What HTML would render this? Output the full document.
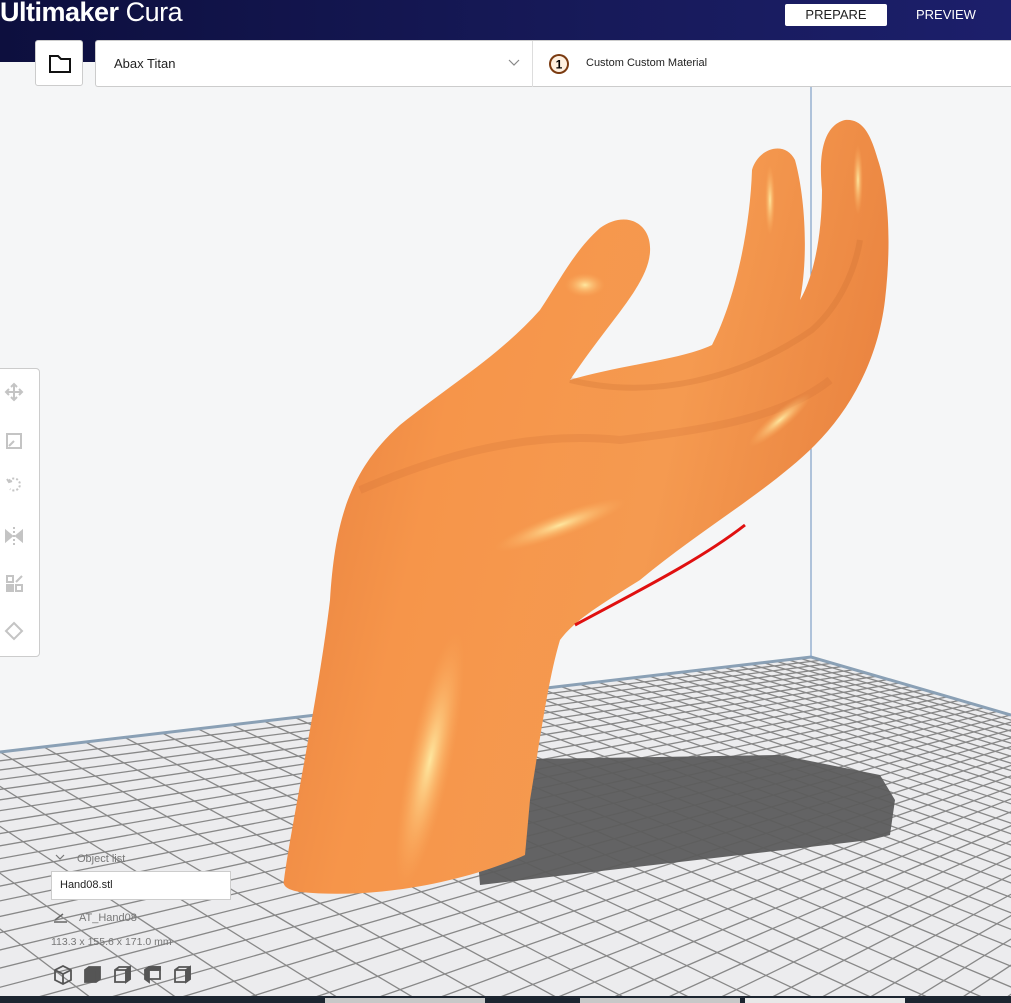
<!DOCTYPE html>
<html><head><meta charset="utf-8">
<style>
*{margin:0;padding:0;box-sizing:border-box}
html,body{width:1011px;height:1003px;overflow:hidden}
body{background:#f5f6f7;font-family:"Liberation Sans",sans-serif;position:relative}
#top{position:absolute;left:0;top:0;width:1011px;height:62px;background:linear-gradient(90deg,#0d0f3e,#171a5a 60%,#1c1f6b)}
#logo{position:absolute;left:0;top:-3px;color:#fff;font-size:27px;letter-spacing:-0.5px}
#logo b{font-weight:bold}
#prep{position:absolute;left:785px;top:4px;width:102px;height:22px;background:#fff;border-radius:2px;color:#222;font-size:13px;text-align:center;line-height:22px}
#prev{position:absolute;left:916px;top:4px;color:#fff;font-size:13px;line-height:22px}
#fold{position:absolute;left:35px;top:40px;width:48px;height:46px;background:#fff;border:1px solid #ccc;border-radius:3px}
#bar{position:absolute;left:95px;top:40px;width:916px;height:47px;background:#fff;border:1px solid #ccc;border-right:none;border-radius:3px 0 0 3px}
#bar .t1{position:absolute;left:18px;top:15px;font-size:13px;color:#222}
#bar .sep{position:absolute;left:436px;top:0;width:1px;height:46px;background:#ddd}
#bar .t2{position:absolute;left:490px;top:16px;font-size:11px;color:#222}
#tools{position:absolute;left:-4px;top:368px;width:44px;height:289px;background:#fff;border:1px solid #ccc;border-radius:4px}
.ol{position:absolute;font-size:11px;color:#777}
</style></head><body>
<svg id="scene" width="1011" height="1003" style="position:absolute;left:0;top:0">
<defs>
<linearGradient id="hg" x1="0" y1="0" x2="1" y2="0.3">
<stop offset="0" stop-color="#e27a3c"/><stop offset="0.35" stop-color="#f6954a"/><stop offset="0.7" stop-color="#f59a50"/><stop offset="1" stop-color="#ea8440"/>
</linearGradient>
<radialGradient id="hl" cx="0.5" cy="0.5" r="0.5"><stop offset="0" stop-color="#fff0a8" stop-opacity="0.9"/><stop offset="1" stop-color="#ffb060" stop-opacity="0"/></radialGradient>
<clipPath id="fl"><polygon points="811,657 1011,715 1011,1003 0,1003 0,752"/></clipPath>
</defs>
<polygon points="811,657 1011,715 1011,1003 0,1003 0,752" fill="#ececee"/>
<g id="grid" stroke="#888" stroke-width="1.3" clip-path="url(#fl)"></g>
<polygon points="470,760 780,755 880,775 895,800 890,835 870,840 480,885" fill="#5c5c5c" opacity="0.95"/>
<polyline points="0,752 811,657 1011,715" fill="none" stroke="#8aa0b5" stroke-width="3"/>
<line x1="811" y1="86" x2="811" y2="657" stroke="#7fa0c8" stroke-width="1.2"/>
<path d="M284,880 C292,820 318,700 330,600 C335,520 350,470 400,425 C450,385 500,355 540,310 C560,280 575,250 600,228 C625,210 652,222 650,252 C648,285 610,320 570,380 C620,365 680,360 712,345 C735,300 750,230 752,170 C758,148 785,140 795,160 C806,200 808,260 800,300 C812,280 822,240 822,190 C818,150 825,125 845,120 C865,118 872,140 878,160 C888,190 892,240 885,300 C878,360 850,410 815,445 C770,490 700,530 640,580 C600,605 575,620 560,640 C548,680 540,740 530,800 L525,855 C470,880 380,900 300,892 C288,890 282,886 284,880 Z" fill="url(#hg)"/>
<path d="M570,380 C650,400 740,380 812,330 C840,305 855,270 860,240" fill="none" stroke="#c86a30" stroke-width="6" opacity="0.25"/>
<path d="M360,490 C430,460 520,430 620,440 C700,430 780,420 830,380" fill="none" stroke="#c86a30" stroke-width="8" opacity="0.2"/>
<path d="M575,625 C640,590 700,560 745,525" fill="none" stroke="#e01010" stroke-width="3"/>
<ellipse cx="560" cy="525" rx="70" ry="12" transform="rotate(-20 560 525)" fill="url(#hl)"/>
<ellipse cx="430" cy="760" rx="22" ry="130" transform="rotate(12 430 760)" fill="url(#hl)"/>
<ellipse cx="780" cy="420" rx="40" ry="9" transform="rotate(-40 780 420)" fill="url(#hl)"/>
<ellipse cx="585" cy="285" rx="20" ry="12" fill="url(#hl)"/>
<ellipse cx="770" cy="200" rx="5" ry="35" fill="url(#hl)"/>
<ellipse cx="858" cy="180" rx="5" ry="35" fill="url(#hl)"/>
<rect x="0" y="996" width="1011" height="7" fill="#1c2530"/>
<rect x="325" y="998" width="160" height="5" fill="#c8c8c8"/>
<rect x="580" y="998" width="160" height="5" fill="#c8c8c8"/>
<rect x="745" y="998" width="160" height="5" fill="#e8e8e8"/>
</svg>
<div id="top"><div id="logo"><b>Ultimaker</b> Cura</div><div id="prep">PREPARE</div><div id="prev">PREVIEW</div></div>
<div id="fold"><svg width="48" height="46"><path d="M14,15 h8 l3,3 h9 v13 h-20 z" fill="none" stroke="#111" stroke-width="2"/></svg></div>
<div id="bar"><div class="t1">Abax Titan</div>
<svg style="position:absolute;left:412px;top:18px" width="12" height="8"><path d="M1,1 L6,6 L11,1" fill="none" stroke="#888" stroke-width="1.2"/></svg>
<div class="sep"></div>
<svg style="position:absolute;left:450px;top:12px" width="26" height="24"><circle cx="13" cy="11" r="10" fill="#7a3a10"/><circle cx="13" cy="11" r="8" fill="#fff0e0"/><text x="13" y="15.5" font-size="12" font-weight="bold" text-anchor="middle" font-family="Liberation Sans">1</text></svg>
<div class="t2">Custom Custom Material</div></div>
<div id="tools">
<svg width="44" height="289" fill="none" stroke="#c4c4c4" stroke-width="2">
<path d="M17,15 v16 M9,23 h16 M14,18 l3,-3 l3,3 M14,28 l3,3 l3,-3 M12,20 l-3,3 l3,3 M22,20 l3,3 l-3,3"/>
<rect x="10" y="65" width="14" height="14"/><path d="M12,77 l5,-5"/>
<path d="M12,112 a6,6 0 1 1 1,8" stroke-dasharray="2 2"/><path d="M10,110 l2,3 l3,-1"/>
<path d="M9,162 l6,5 l-6,5 z M25,162 l-6,5 l6,5 z" fill="#c4c4c4"/><path d="M17,158 v18" stroke-dasharray="2 2"/>
<rect x="10" y="207" width="6" height="6"/><rect x="19" y="216" width="6" height="6"/><rect x="10" y="216" width="6" height="6" fill="#c4c4c4"/><path d="M19,213 l6,-6"/>
<path d="M17,254 l8,8 l-8,8 l-8,-8 z"/>
</svg></div>
<svg style="position:absolute;left:55px;top:853px" width="10" height="8"><path d="M1,2 L5,6 L9,2" fill="none" stroke="#777" stroke-width="1.2"/></svg>
<div class="ol" style="left:77px;top:853px">Object list</div>
<div style="position:absolute;left:51px;top:871px;width:180px;height:29px;background:#fff;border:1px solid #ccc;font-size:11px;color:#222;padding:7px 8px">Hand08.stl</div>
<svg style="position:absolute;left:52px;top:910px" width="16" height="14"><path d="M2,12 h13 M3,10 l8,-6" stroke="#666" stroke-width="1.5"/></svg>
<div class="ol" style="left:79px;top:912px">AT_Hand08</div>
<div class="ol" style="left:51px;top:936px;font-size:10.5px">113.3 x 155.6 x 171.0 mm</div>
<svg style="position:absolute;left:52px;top:964px" width="145" height="22" fill="none" stroke="#555" stroke-width="1.8">
<path d="M3,6 l8,-4 l8,4 v10 l-8,4 l-8,-4 z M3,6 l8,4 l8,-4 M11,10 v10"/>
<path d="M33,6 l4,-3 h11 v12 l-4,3 h-11 z" fill="#555"/><path d="M33,6 h11 v12"/>
<path d="M63,6 l4,-3 h11 v12 l-4,3 h-11 z M63,6 h11 v12 l4,-3" /><path d="M74,6 l4,-3 v12 l-4,3z" fill="#555"/>
<path d="M93,6 l4,-3 h11 v12 h-11 z M97,6 h11"/><path d="M93,6 l4,-3 h11 v3 h-11 v12 l-4,-3z" fill="#555"/>
<path d="M123,6 l4,-3 h11 v12 l-4,3 h-11 z M123,6 h11 v12"/><path d="M134,6 l4,-3 v12 l-4,3z" fill="#555"/>
</svg>
<script>
(function(){
var P=[[811,657],[1011,715],[256,904],[0,752]];
var x0=P[0][0],y0=P[0][1],x1=P[1][0],y1=P[1][1],x2=P[2][0],y2=P[2][1],x3=P[3][0],y3=P[3][1];
var dx1=x1-x2,dx2=x3-x2,dx3=x0-x1+x2-x3,dy1=y1-y2,dy2=y3-y2,dy3=y0-y1+y2-y3;
var den=dx1*dy2-dx2*dy1,g=(dx3*dy2-dx2*dy3)/den,h=(dx1*dy3-dx3*dy1)/den;
var a=x1-x0+g*x1,b=x3-x0+h*x3,c=x0,d=y1-y0+g*y1,e=y3-y0+h*y3,f=y0;
function m(u,v){var w=g*u+h*v+1;return w>0.03?[(a*u+b*v+c)/w,(d*u+e*v+f)/w]:null;}
var G=document.getElementById('grid'),s='';
var N=17,M=36;
function seg(p,q){if(p&&q)s+='<line x1="'+p[0].toFixed(1)+'" y1="'+p[1].toFixed(1)+'" x2="'+q[0].toFixed(1)+'" y2="'+q[1].toFixed(1)+'"/>';}
function far(fn){var t=30;while(t>0.05){var r=fn(t);if(r)return r;t*=0.85;}return null;}
for(var i=1;i<N*10;i++){var u=i/N;var p=m(u,0);var q=far(function(t){return m(u,t);});seg(p,q);}
for(var j=1;j<M*10;j++){var v=j/M;var p=m(0,v);var q=far(function(t){return m(t,v);});seg(p,q);}
G.innerHTML=s;
})();
</script>
</body></html>
